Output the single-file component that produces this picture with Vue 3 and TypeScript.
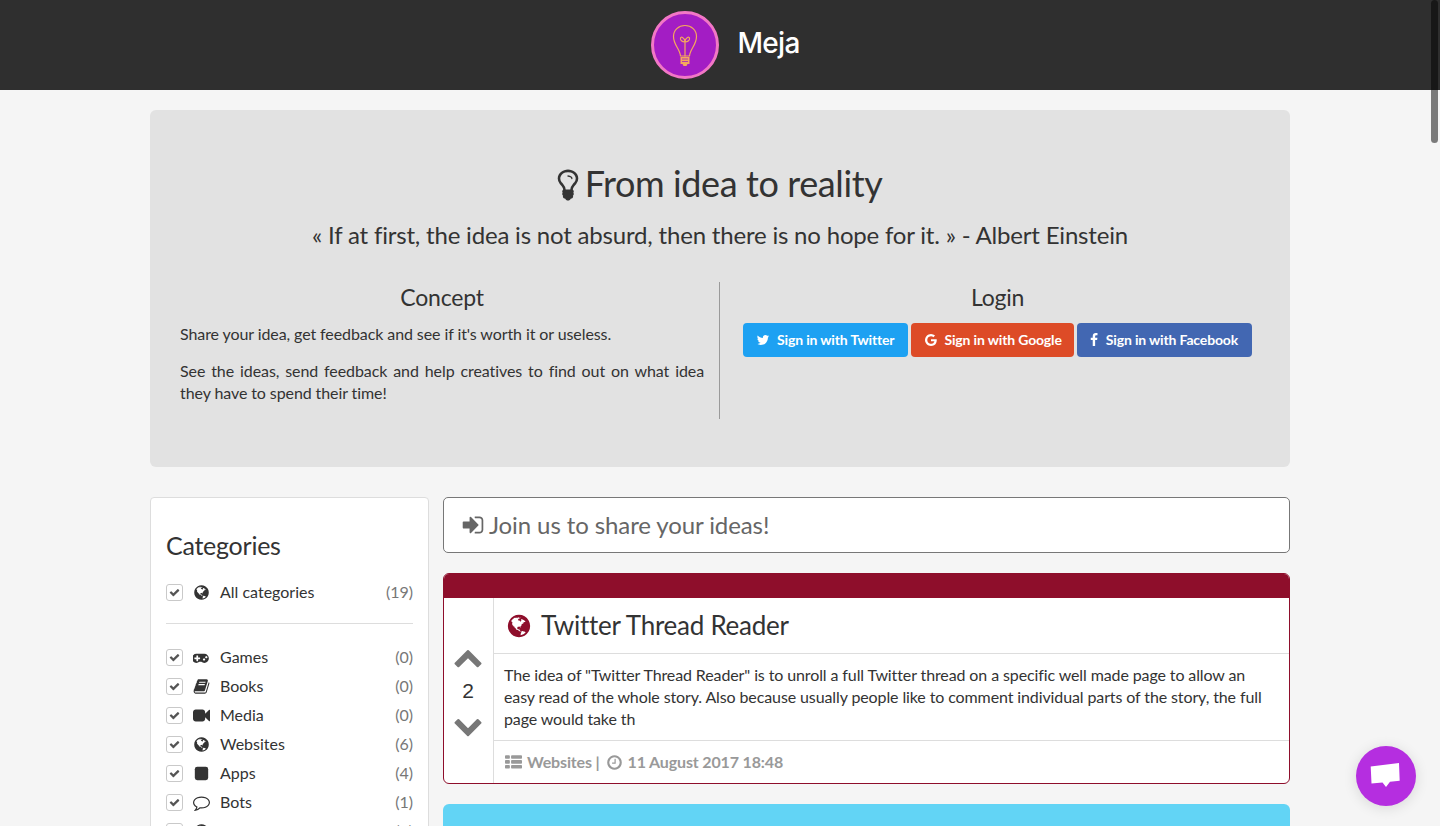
<template>
  <div class="page">
    <header class="topbar">
      <div class="logo">
        <svg viewBox="0 0 68 68" width="68" height="68">
          <circle cx="34" cy="34" r="32.5" fill="#a31dc4" stroke="#f277c6" stroke-width="3" />
          <g fill="none" stroke="#f5a95c" stroke-width="1.2" stroke-linecap="round" stroke-linejoin="round">
            <path d="M29.500 45C29 38 22.500 34 22.500 25.500C22.500 19 27.500 14.500 34 14.500C40.500 14.500 45.500 19 45.500 25.500C45.500 34 39 38 38.500 45Z" />
            <path d="M34 45V29M34 31C31 31 29 29 29.500 27C30 25.500 33 26 34 30C35 26 38 25.500 38.500 27C39 29 37 31 34 31Z" />
          </g>
          <path d="M29.500 46h9v7h-9z" fill="#f5a95c" />
          <path d="M31 48h6M31 50.500h6" stroke="#a31dc4" stroke-width="0.8" />
          <path d="M31.500 53h5l-1 2h-3z" fill="#f5a95c" />
        </svg>
      </div>
      <span class="brand">Meja</span>
    </header>

    <main class="container">
      <section class="hero">
        <h1 class="hero-title">
          <svg class="ic bulb" viewBox="0 0 1792 1792"><path :d="icons.bulb" /></svg>From idea to reality
        </h1>
        <p class="quote">« If at first, the idea is not absurd, then there is no hope for it. » - Albert Einstein</p>
        <div class="hero-cols">
          <div class="concept">
            <h3>Concept</h3>
            <p>Share your idea, get feedback and see if it's worth it or useless.</p>
            <p>See the ideas, send feedback and help creatives to find out on what idea they have to spend their time!</p>
          </div>
          <div class="login">
            <h3>Login</h3>
            <div class="login-btns">
              <a v-for="b in logins" :key="b.label" :class="['btn', b.cls]">
                <svg class="ic" viewBox="0 0 1792 1792"><path :d="icons[b.icon]" /></svg>
                {{ b.label }}
              </a>
            </div>
          </div>
        </div>
      </section>

      <div class="columns">
        <aside class="sidebar">
          <h3>Categories</h3>
          <label class="cat all">
            <span class="check"><svg class="ic" viewBox="0 0 1792 1792"><path :d="icons.check" /></svg></span>
            <svg class="ic cat-ic" viewBox="0 0 1792 1792"><path :d="icons.globe" /></svg>
            <span class="cat-name">All categories</span>
            <span class="count">(19)</span>
          </label>
          <hr />
          <label v-for="c in categories" :key="c.name" class="cat">
            <span class="check"><svg class="ic" viewBox="0 0 1792 1792"><path :d="icons.check" /></svg></span>
            <svg class="ic cat-ic" :viewBox="c.box || '0 0 1792 1792'"><path :d="icons[c.icon]" /></svg>
            <span class="cat-name">{{ c.name }}</span>
            <span class="count">({{ c.count }})</span>
          </label>
        </aside>

        <div class="feed">
          <div class="join">
            <svg class="ic" viewBox="0 0 1792 1792"><path :d="icons.signin" /></svg>Join us to share your ideas!
          </div>

          <article class="idea">
            <div class="idea-band"></div>
            <div class="idea-body">
              <div class="votes">
                <svg class="ic" viewBox="0 0 1792 1792"><path :d="icons.up" /></svg>
                <span>2</span>
                <svg class="ic" viewBox="0 0 1792 1792"><path :d="icons.down" /></svg>
              </div>
              <div class="idea-main">
                <h2>
                  <svg class="ic" viewBox="0 0 1792 1792"><path :d="icons.globe" /></svg>
                  Twitter Thread Reader
                </h2>
                <p>The idea of "Twitter Thread Reader" is to unroll a full Twitter thread on a specific well made page to allow an easy read of the whole story. Also because usually people like to comment individual parts of the story, the full page would take th</p>
                <div class="meta">
                  <svg class="ic" viewBox="0 0 1792 1792"><path :d="icons.list" /></svg>
                  <span>Websites |</span>
                  <svg class="ic clock" viewBox="0 0 1792 1792"><path :d="icons.clock" /></svg>
                  <span>11 August 2017 18:48</span>
                </div>
              </div>
            </div>
          </article>

          <div class="idea-next"></div>
        </div>
      </div>
    </main>

    <div class="scrollthumb"></div>
    <button class="chat">
      <svg viewBox="0 0 32 32" width="32" height="32">
        <path d="M0.700 6.500L29 3L29.700 20.700L20 21.700L16 27L12.500 22.500L1.500 23.500Z" fill="#fff" />
      </svg>
    </button>
  </div>
</template>

<script setup lang="ts">
const icons: Record<string, string> = {
  bulb: "M1120 576q0 13-9.500 22.500t-22.500 9.500-22.500-9.500-9.500-22.500q0-46-54-71t-106-25q-13 0-22.500-9.500t-9.500-22.500 9.500-22.500 22.500-9.500q50 0 99.500 16t87 54 37.500 90zm160 0q0-72-34.500-134t-90-101.500-123-62-136.500-22.500-136.500 22.500-123 62-90 101.500-34.500 134q0 101 68 180 10 11 30.500 33t30.500 33q128 153 141 298h228q13-145 141-298 10-11 30.500-33t30.500-33q68-79 68-180zm128 0q0 155-103 268-45 49-74.500 87t-59.500 95.500-34 107.500q47 28 47 82 0 37-25 64 25 27 25 64 0 52-45 81 13 23 13 47 0 46-31.500 71t-77.500 25q-20 44-60 70t-87 26-87-26-60-70q-46 0-77.500-25t-31.500-71q0-24 13-47-45-29-45-81 0-37 25-64-25-27-25-64 0-54 47-82-4-50-34-107.500t-59.500-95.500-74.500-87q-103-113-103-268 0-99 44.500-184.500t117-142 164-89 186.500-32.500 186.500 32.500 164 89 117 142 44.500 184.500z",
  check: "M1671 566q0 40-28 68l-724 724-136 136q-28 28-68 28t-68-28l-136-136-362-362q-28-28-28-68t28-68l136-136q28-28 68-28t68 28l294 295 656-657q28-28 68-28t68 28l136 136q28 28 28 68z",
  up: "M1683 1331l-166 165q-19 19-45 19t-45-19l-531-531-531 531q-19 19-45 19t-45-19l-166-165q-19-19-19-45.5t19-45.5l742-741q19-19 45-19t45 19l742 741q19 19 19 45.5t-19 45.5z",
  down: "M1683 808l-742 741q-19 19-45 19t-45-19l-742-741q-19-19-19-45.5t19-45.5l166-165q19-19 45-19t45 19l531 531 531-531q19-19 45-19t45 19l166 165q19 19 19 45.5t-19 45.5z",
  twitter: "M1684 408q-67 98-162 167 1 14 1 42 0 130-38 259.500t-115.500 248.500-184.500 210.500-258 146-323 54.500q-271 0-496-145 35 4 78 4 225 0 401-138-105-2-188-64.500t-114-159.500q33 5 61 5 43 0 85-11-112-23-185.500-111.500t-73.500-205.500v-4q68 38 146 41-66-44-105-115t-39-154q0-88 44-163 121 149 294.500 238.500t371.500 99.500q-8-38-8-74 0-134 94.500-228.500t228.500-94.500q140 0 236 102 109-21 205-78-37 115-142 178 93-10 186-50z",
  facebook: "M1343 12v264h-157q-86 0-116 36t-30 108v189h293l-39 296h-254v759h-306v-759h-255v-296h255v-218q0-186 104-288.500t277-102.500q147 0 228 12z",
  google: "M896 786h725q12 67 12 128 0 217-91 387.500t-259.500 266.500-386.500 96q-157 0-299-60.500t-245-163.500-163.500-245-60.500-299 60.500-299 163.500-245 245-163.500 299-60.500q300 0 515 201l-209 201q-123-119-306-119-129 0-238.500 65t-173.500 176.500-64 243.500 64 243.500 173.500 176.500 238.500 65q87 0 160-24t120-60 82-82 51.500-87 22.500-78h-436v-264z",
  signin: "M1312 896q0 26-19 45l-544 544q-19 19-45 19t-45-19-19-45v-288h-448q-26 0-45-19t-19-45v-384q0-26 19-45t45-19h448v-288q0-26 19-45t45-19 45 19l544 544q19 19 19 45zm352-352v704q0 119-84.500 203.500t-203.500 84.500h-320q-13 0-22.500-9.500t-9.500-22.500q0-4-1-20t-.5-26.500 3-23.500 10-19.500 20.500-6.500h320q66 0 113-47t47-113v-704q0-66-47-113t-113-47h-312l-11.500-1-11.500-3-8-5.500-7-9-2-13.500q0-4-1-20t-.5-26.500 3-23.500 10-19.500 20.500-6.500h320q119 0 203.500 84.500t84.500 203.500z",
  globe: "M896 128q209 0 385.500 103t279.500 279.500 103 385.500-103 385.500-279.500 279.500-385.500 103-385.500-103-279.500-279.500-103-385.500 103-385.500 279.500-279.500 385.500-103zm274 521q-2 1-9.500 9.500t-13.500 9.500q2 0 4.500-5t5-11 3.500-7q6-7 22-15 14-6 52-12 34-8 51 11-2-2 9.500-13t14.500-12q3-2 15-4.500t15-7.500l2-22q-12 1-17.500-7t-6.500-21q0 2-6 8 0-7-4.500-8t-11.500 1-9 1q-10-3-15-7.500t-8-16.500-4-15q-2-5-9.500-11t-9.500-10q-1-2-2.500-5.500t-3-6.500-4-5.500-5.500-2.500-7 5-7.500 10-4.500 5q-3-2-6-1.500t-4.500 1-4.500 3-5 3.500q-3 2-8.500 3t-8.500 2q15-5-1-11-10-4-16-3 9-4 7.500-12t-8.500-14h5q-1-4-8.500-8.500t-17.500-8.500-13-6q-8-5-34-9.500t-33-.5q-5 6-4.500 10.500t4 14 3.500 12.500q1 6-5.500 13t-6.500 12q0 7 14 15.500t10 21.500q-3 8-16 16t-16 12q-5 8-1.500 18.500t10.500 16.500q2 2 1.500 4t-3.500 4.500-5.500 4-6.500 3.500l-3 2q-11 5-20.500-6t-13.500-26q-7-25-16-30-23-8-29 1-5-13-41-26-25-9-58-4 6-1 0-15-7-15-19-12 3-6 4-17.500t1-13.500q3-13 12-23 1-1 7-8.500t9.500-13.500.5-6q35 4 50-11 5-5 11.500-17t10.500-17q9-6 14-5.500t14.500 5.500 14.500 5q14 1 15.500-11t-7.500-20q12 1 3-17-4-7-8-9-12-4-27 5-8 4 2 8-1-1-9.500 10.500t-16.500 17.500-16-5q-1-1-5.500-13.500t-9.500-13.500q-8 0-16 15 3-8-11-15t-24-8q19-12-8-27-7-4-20.500-5t-19.500 4q-5 7-5.500 11.500t5 8 10.500 5.500 11.500 4 8.500 3q14 10 8 14-2 1-8.500 3.500t-11.500 4.500-6 4q-3 4 0 14t-2 14q-5-5-9-17.500t-7-16.500q7 9-25 6l-10-1q-4 0-16 2t-20.500 1-13.500-8q-4-8 0-20 1-4 4-2-4-3-11-9.500t-10-8.500q-46 15-94 41 6 1 12-1 5-2 13-6.500t10-5.500q34-14 42-7l5-5q14 16 20 25-7-4-30-1-20 6-22 12 7 12 5 18-4-3-11.500-10t-14.500-11-15-5q-16 0-22 1-146 80-235 222 7 7 12 8 4 1 5 9t2.500 11 11.500-3q9 8 3 19 1-1 44 27 19 17 21 21 3 11-10 18-1-2-9-9t-9-4q-3 5 .5 18.500t10.500 12.500q-7 0-9.500 16t-2.500 35.500-1 23.500l2 1q-3 12 5.500 34.500t21.500 19.500q-13 3 20 43 6 8 8 9 3 2 12 7.500t15 10 10 10.500q4 5 10 22.500t14 23.500q-2 6 9.500 20t10.500 23q-1 0-2.500 1t-2.500 1q3 7 15.500 14t15.500 13q1 3 2 10t3 11 8 2q2-20-24-62-15-25-17-29-3-5-5.500-15.500t-4.500-14.500q2 0 6 1.500t8.500 3.500 7.500 4 2 3q-3 7 2 17.500t12 18.500 17 19 12 13q6 6 14 19.500t0 13.500q9 0 20 10.500t17 19.500q5 8 8 26t5 24q2 7 8.500 13.500t12.500 9.500l16 8 13 7q5 2 18.500 10.500t21.500 11.500q10 4 16 4t14.500-2.500 13.500-3.500q15-2 29 15t21 21q36 19 55 11-2 1 .5 7.500t8 15.500 9 14.500 5.500 8.500q5 6 18 15t18 15q6-4 7-9-3 8 7 20t18 10q14-3 14-32-31 15-49-18 0-1-2.500-5.500t-4-8.500-2.500-8.500 0-7.500 5-3q9 0 10-3.500t-2-12.500-4-13q-1-8-11-20t-12-15q-5 9-16 8t-16-9q0 1-1.500 5.500t-1.500 6.500q-13 0-15-1 1-3 2.500-17.500t3.500-22.500q1-4 5.500-12t7.500-14.500 4-12.500-4.500-9.500-17.500-2.500q-19 1-26 20-1 3-3 10.500t-5 11.500-9 7q-7 3-24 2t-24-5q-13-8-22.500-29t-9.500-37q0-10 2.500-26.500t3-25-5.500-24.500q3-2 9-9.500t10-10.500q2-1 4.500-1.500t4.500 0 4-1.500 3-6q-1-1-4-3-3-3-4-3 7 3 28.500-1.500t27.500 1.500q15 11 22-2 0-1-2.500-9.500t-.5-13.500q5 27 29 9 3 3 15.500 5t17.500 5q3 2 7 5.500t5.500 4.500 5-.5 8.500-6.500q10 14 12 24 11 40 19 44 7 3 11 2t4.500-9.500 0-14-1.500-12.500l-1-8v-18l-1-8q-15-3-18.500-12t1.500-18.500 15-18.500q1-1 8-3.500t15.500-6.500 12.500-8q21-19 15-35 7 0 11-9-1 0-5-3t-7.500-5-4.500-2q9-5 2-16 5-3 7.500-11t7.500-10q9 12 21 2 8-8 1-16 5-7 20.500-10.500t18.500-9.500q7 2 8-2t1-12 3-12q4-5 15-9t13-5l17-11q3-4 0-4 18 2 31-11 10-11-6-20 3-6-3-9.500t-15-5.500q3-1 11.500-.5t10.500-1.500q15-10-7-16-17-5-43 12zm-163 877q206-36 351-189-3-3-12.500-4.500t-12.500-3.500q-18-7-24-8 1-7-2.500-13t-8-9-12.500-8-11-7q-2-2-7-6t-7-5.500-7.500-4.500-8.500-2-10 1l-3 1q-3 1-5.500 2.500t-5.500 3-4 3 0 2.500q-21-17-36-22-5-1-11-5.500t-10.500-7-10-1.500-11.500 7q-5 5-6 15t-2 13q-7-5 0-17.500t2-18.500q-3-6-10.500-4.500t-12 4.500-11.500 8.500-9 6.500-8.500 5.500-8.500 7.500q-3 4-6 12t-5 11q-2-4-11.500-6.500t-9.500-5.500q2 10 4 35t5 38q7 31-12 48-27 25-29 40-4 22 12 26 0 7-8 20.500t-7 21.500q0 6 2 16z",
  gamepad: "M800 1056v-128q0-14-9-23t-23-9h-192v-192q0-14-9-23t-23-9h-128q-14 0-23 9t-9 23v192h-192q-14 0-23 9t-9 23v128q0 14 9 23t23 9h192v192q0 14 9 23t23 9h128q14 0 23-9t9-23v-192h192q14 0 23-9t9-23zm576 64q0-53-37.500-90.500t-90.500-37.500-90.500 37.500-37.500 90.500 37.500 90.500 90.500 37.500 90.500-37.500 37.500-90.500zm256-256q0-53-37.500-90.500t-90.500-37.500-90.500 37.500-37.500 90.500 37.500 90.500 90.500 37.500 90.500-37.500 37.500-90.500zm160 128q0 212-150 362t-362 150q-192 0-338-128h-220q-146 128-338 128-212 0-362-150t-150-362 150-362 362-150h896q212 0 362 150t150 362z",
  book: "M1703 478q40 57 18 129l-275 906q-19 64-76.500 107.500t-122.500 43.500h-923q-77 0-148.500-53.500t-99.500-131.500q-24-67-2-127 0-4 3-27t4-37q1-8-3-21.500t-3-19.500q2-11 8-21t16.500-23.500 16.500-23.500q23-38 45-91.500t30-91.500q3-10 .5-30t-.5-28q3-11 17-28t17-23q21-36 42-92t25-90q1-9-2.500-32t.5-28q4-13 22-30.500t22-22.500q19-26 42.500-84.500t27.500-96.500q1-8-3-25.500t-2-26.500q2-8 9-18t18-23 17-21q8-12 16.500-30.500t15-35 16-36 19.500-32 26.500-23.500 36-11.500 47.500 5.500l-1 3q38-9 51-9h761q74 0 114 56t18 130l-274 906q-36 119-71.500 153.500t-128.500 34.500h-869q-27 0-38 15-11 16-1 43 24 70 144 70h923q29 0 56-15.500t35-41.500l300-987q7-22 5-57 38 15 59 43zm-1064 2q-4 13 2 22.500t20 9.500h608q13 0 25.500-9.500t16.500-22.500l21-64q4-13-2-22.500t-20-9.500h-608q-13 0-25.500 9.500t-16.500 22.500zm-83 256q-4 13 2 22.500t20 9.500h608q13 0 25.500-9.500t16.500-22.500l21-64q4-13-2-22.500t-20-9.500h-608q-13 0-25.500 9.500t-16.500 22.500z",
  video: "M1792 352v1088q0 42-39 59-13 5-25 5-27 0-45-19l-403-403v166q0 119-84.500 203.500t-203.500 84.500h-704q-119 0-203.500-84.500t-84.500-203.500v-704q0-119 84.500-203.500t203.500-84.500h704q119 0 203.500 84.500t84.500 203.500v165l403-402q18-19 45-19 12 0 25 5 39 17 39 59z",
  apps: "M448 192h896q256 0 256 256v896q0 256-256 256h-896q-256 0-256-256v-896q0-256 256-256z",
  comment: "M896 384q-204 0-381.500 69.500t-282 187.500-104.500 255q0 112 71.500 213.500t201.500 175.500l87 50-27 96q-24 91-70 172 152-63 275-171l43-38 57 6q69 8 130 8 204 0 381.500-69.500t282-187.500 104.500-255-104.500-255-282-187.500-381.500-69.500zm896 512q0 174-120 321.500t-326 233-450 85.500q-70 0-145-8-198 175-460 242-49 14-114 22h-5q-15 0-27-10.500t-16-27.500v-1q-3-4-.5-12t2-10 4.500-9.500l6-9 7-8.500 8-9q7-8 31-34.500t34.500-38 31-39.500 32.500-51 27-59 26-76q-157-89-247.500-220t-90.500-281q0-174 120-321.500t326-233 450-85.500 450 85.500 326 233 120 321.500z",
  list: "M512 1248v192q0 40-28 68t-68 28h-320q-40 0-68-28t-28-68v-192q0-40 28-68t68-28h320q40 0 68 28t28 68zm0-512v192q0 40-28 68t-68 28h-320q-40 0-68-28t-28-68v-192q0-40 28-68t68-28h320q40 0 68 28t28 68zm1280 512v192q0 40-28 68t-68 28h-960q-40 0-68-28t-28-68v-192q0-40 28-68t68-28h960q40 0 68 28t28 68zm-1280-1024v192q0 40-28 68t-68 28h-320q-40 0-68-28t-28-68v-192q0-40 28-68t68-28h320q40 0 68 28t28 68zm1280 512v192q0 40-28 68t-68 28h-960q-40 0-68-28t-28-68v-192q0-40 28-68t68-28h960q40 0 68 28t28 68zm0-512v192q0 40-28 68t-68 28h-960q-40 0-68-28t-28-68v-192q0-40 28-68t68-28h960q40 0 68 28t28 68z",
  clock: "M1024 544v448q0 14-9 23t-23 9h-320q-14 0-23-9t-9-23v-64q0-14 9-23t23-9h224v-352q0-14 9-23t23-9h64q14 0 23 9t9 23zm416 352q0-148-73-273t-198-198-273-73-273 73-198 198-73 273 73 273 198 198 273 73 273-73 198-198 73-273zm224 0q0 209-103 385.500t-279.500 279.500-385.500 103-385.500-103-279.500-279.500-103-385.500 103-385.500 279.500-279.500 385.500-103 385.500 103 279.500 279.500 103 385.500z",
};

const logins = [
  { label: "Sign in with Twitter", cls: "tw", icon: "twitter" },
  { label: "Sign in with Google", cls: "gg", icon: "google" },
  { label: "Sign in with Facebook", cls: "fb", icon: "facebook" },
];

const categories: { name: string; count: number; icon: string; box?: string }[] = [
  { name: "Games", count: 0, icon: "gamepad", box: "0 0 1920 1792" },
  { name: "Books", count: 0, icon: "book" },
  { name: "Media", count: 0, icon: "video" },
  { name: "Websites", count: 6, icon: "globe" },
  { name: "Apps", count: 4, icon: "apps" },
  { name: "Bots", count: 1, icon: "comment" },
  { name: "Social networks", count: 1, icon: "globe" },
];
</script>

<style scoped>
.page {
  position: relative;
  height: 826px;
  overflow: hidden;
  background: #f5f5f5;
  color: #333;
  font-family: Lato, "Liberation Sans", sans-serif;
  font-size: 16px;
  line-height: 1.4;
}

.ic {
  width: 1em;
  height: 1em;
  fill: currentColor;
  flex: none;
}

.topbar {
  height: 90px;
  background: #2f2f2f;
  display: flex;
  align-items: center;
  justify-content: center;
  padding-left: 13px;
  padding-right: 1px;
}

.logo {
  display: flex;
  margin-right: 18px;
}

.brand {
  color: #fff;
  font-family: Inter, "Noto Sans", sans-serif;
  font-size: 28px;
  font-weight: 500;
  letter-spacing: -0.7px;
  margin: 0 1px 2px 0;
}

.container {
  width: 1140px;
  margin: 0 auto;
  padding-top: 20px;
}

.hero {
  height: 357px;
  background: #e2e2e2;
  border-radius: 6px;
  padding: 50px 30px 0;
  box-sizing: border-box;
}

.hero-title {
  margin: 0;
  font-size: 36px;
  font-weight: 400;
  letter-spacing: -0.4px;
  line-height: 46px;
  text-align: center;
}

.bulb {
  width: 36px;
  height: 36px;
  margin-left: -8px;
  margin-right: -1px;
  vertical-align: -6px;
}

.quote {
  margin: 11px 0 0;
  font-size: 24px;
  letter-spacing: -0.19px;
  line-height: 36px;
  text-align: center;
}

.hero-cols {
  display: grid;
  grid-template-columns: 540px 1fr;
  margin-top: 29px;
}

.hero-cols h3 {
  margin: 0;
  font-size: 23px;
  font-weight: 400;
  letter-spacing: -0.2px;
  line-height: 31px;
  text-align: center;
}

.concept {
  height: 137px;
  padding-right: 15px;
  border-right: 1px solid #9a9a9a;
  box-sizing: border-box;
}

.concept p {
  margin: 10px 0 15px;
  letter-spacing: -0.09px;
  line-height: 22px;
  text-align: justify;
}

.concept p + p {
  margin-top: 15px;
}

.login {
  justify-self: start;
  margin-left: 23px;
}

.login-btns {
  display: flex;
  gap: 3px;
  margin-top: 10px;
}

.btn {
  display: flex;
  align-items: center;
  gap: 7px;
  height: 34px;
  padding: 0 13px;
  border-radius: 4px;
  color: #fff;
  font-size: 14px;
  font-weight: 700;
  letter-spacing: -0.15px;
  white-space: nowrap;
}

.tw { background: #1da1f2; padding-right: 14px; }
.gg { background: #dd4b27; gap: 6px; padding-right: 12px; }
.fb { background: #4267b2; gap: 8px; padding-right: 14px; }

.fb .ic {
  margin: 0 -3px;
}

.columns {
  display: grid;
  grid-template-columns: 279px 847px;
  column-gap: 14px;
  margin-top: 30px;
}

.sidebar {
  background: #fff;
  border: 1px solid #ddd;
  border-radius: 4px;
  padding: 29px 15px 0;
  height: 500px;
  box-sizing: border-box;
}

.sidebar h3 {
  margin: 0 0 15px;
  font-size: 25px;
  font-weight: 400;
  letter-spacing: -0.25px;
  line-height: 36px;
}

.sidebar hr {
  border: 0;
  border-top: 1px solid #ddd;
  margin: 16px 0 19px;
}

.cat {
  display: flex;
  align-items: center;
  height: 29px;
}

.check {
  width: 15px;
  height: 15px;
  border: 1px solid #c9c9c9;
  border-radius: 3px;
  display: flex;
  align-items: center;
  justify-content: center;
  color: #555;
  font-size: 11px;
  flex: none;
}

.cat-ic {
  width: 17px;
  height: 17px;
  margin-left: 10px;
  color: #333;
}

.cat-name {
  margin-left: 10px;
  flex: 1;
}

.count {
  color: #777;
}

.feed {
  display: flex;
  flex-direction: column;
  gap: 20px;
}

.join {
  height: 56px;
  box-sizing: border-box;
  background: #fff;
  border: 1px solid #777;
  border-radius: 5px;
  padding-left: 17px;
  display: flex;
  align-items: center;
  color: #666;
  font-size: 24px;
  letter-spacing: -0.1px;
  gap: 4px;
}

.idea {
  height: 211px;
  box-sizing: border-box;
  border-radius: 6px;
  border: 1px solid #8e0e2b;
  background: #fff;
  display: flex;
  flex-direction: column;
  overflow: hidden;
}

.idea-band {
  height: 24px;
  background: #8e0e2b;
  flex: none;
}

.idea-body {
  display: flex;
  flex: 1;
}

.votes {
  width: 48px;
  border-right: 1px solid #ddd;
  display: flex;
  flex-direction: column;
  align-items: center;
  justify-content: center;
  color: #777;
  font-size: 30px;
  flex: none;
  padding: 1px 1px 0 0;
}

.votes span {
  color: #333;
  font-size: 21px;
  line-height: 38px;
  font-family: "Liberation Sans", sans-serif;
}

.idea-main {
  flex: 1;
  display: flex;
  flex-direction: column;
}

.idea-main h2 {
  margin: 0;
  height: 56px;
  box-sizing: border-box;
  border-bottom: 1px solid #ddd;
  display: flex;
  align-items: center;
  gap: 9px;
  padding-left: 12px;
  font-size: 26px;
  font-weight: 400;
  letter-spacing: -0.26px;
}

.idea-main h2 .ic {
  width: 26px;
  height: 26px;
  color: #8e0e2b;
}

.idea-main p {
  margin: 0;
  height: 87px;
  box-sizing: border-box;
  padding: 10px 10px 0;
  letter-spacing: -0.11px;
  line-height: 22px;
  border-bottom: 1px solid #ddd;
}

.meta {
  flex: 1;
  display: flex;
  align-items: center;
  padding-left: 11px;
  color: #999;
  font-weight: 700;
  letter-spacing: -0.15px;
  gap: 5px;
}

.meta .ic {
  width: 17px;
  height: 17px;
}

.clock {
  margin-left: 1px;
}

.idea-next {
  height: 200px;
  background: #62d4f5;
  border-radius: 6px;
}

.scrollthumb {
  position: absolute;
  top: 0;
  right: 2px;
  width: 7px;
  height: 143px;
  border-radius: 4px;
  background: rgba(0, 0, 0, 0.5);
}

.chat {
  position: absolute;
  left: 1356px;
  top: 746px;
  width: 60px;
  height: 60px;
  border: 0;
  padding: 0;
  border-radius: 50%;
  background: #b52ee0;
  box-shadow: 0 2px 14px rgba(0, 0, 0, 0.12);
  display: flex;
  align-items: center;
  justify-content: center;
}
</style>

<style>
html,
body {
  margin: 0;
  overflow: hidden;
}
</style>
